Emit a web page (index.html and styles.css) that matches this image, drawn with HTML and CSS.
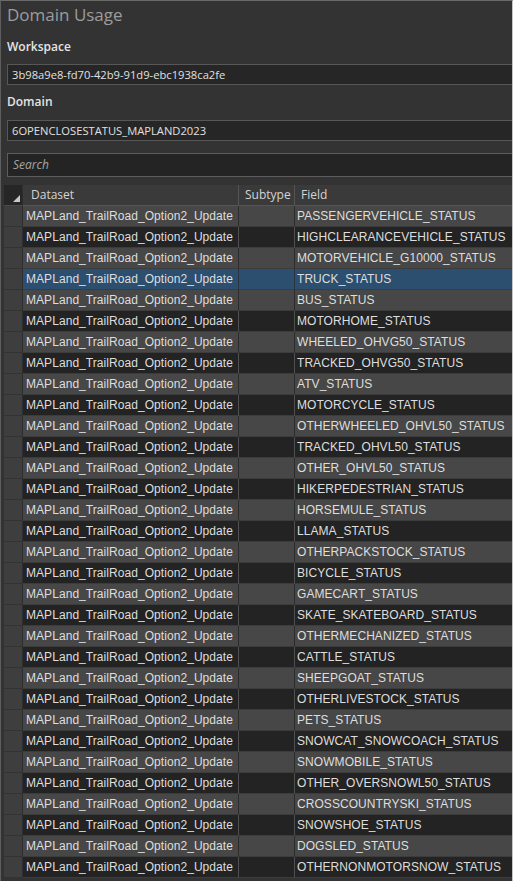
FILE: index.html
```html
<!DOCTYPE html>
<html>
<head>
<meta charset="utf-8">
<link rel="stylesheet" href="styles.css">
</head>
<body>
<div class="panel">
  <div class="title">Domain Usage</div>
  <div class="label">Workspace</div>
  <div class="textbox">3b98a9e8-fd70-42b9-91d9-ebc1938ca2fe</div>
  <div class="label label2">Domain</div>
  <div class="textbox">6OPENCLOSESTATUS_MAPLAND2023</div>
  <div class="search">Search</div>
  <div class="grid">
    <div class="row head">
      <div class="rh corner"><span class="tri"></span></div>
      <div class="c ds">Dataset</div>
      <div class="c st">Subtype</div>
      <div class="c fd">Field</div>
    </div>
    <div class="rows" id="rows"></div>
  </div>
</div>
<script src="app.js"></script>
</body>
</html>
```

FILE: app.js
```js
var fields = ["PASSENGERVEHICLE_STATUS","HIGHCLEARANCEVEHICLE_STATUS","MOTORVEHICLE_G10000_STATUS","TRUCK_STATUS","BUS_STATUS","MOTORHOME_STATUS","WHEELED_OHVG50_STATUS","TRACKED_OHVG50_STATUS","ATV_STATUS","MOTORCYCLE_STATUS","OTHERWHEELED_OHVL50_STATUS","TRACKED_OHVL50_STATUS","OTHER_OHVL50_STATUS","HIKERPEDESTRIAN_STATUS","HORSEMULE_STATUS","LLAMA_STATUS","OTHERPACKSTOCK_STATUS","BICYCLE_STATUS","GAMECART_STATUS","SKATE_SKATEBOARD_STATUS","OTHERMECHANIZED_STATUS","CATTLE_STATUS","SHEEPGOAT_STATUS","OTHERLIVESTOCK_STATUS","PETS_STATUS","SNOWCAT_SNOWCOACH_STATUS","SNOWMOBILE_STATUS","OTHER_OVERSNOWL50_STATUS","CROSSCOUNTRYSKI_STATUS","SNOWSHOE_STATUS","DOGSLED_STATUS","OTHERNONMOTORSNOW_STATUS"];
var host = document.getElementById("rows");
fields.forEach(function (f, i) {
  var r = document.createElement("div");
  r.className = "row data " + (i === 3 ? "sel" : (i % 2 === 0 ? "odd" : "even"));
  r.innerHTML = '<div class="rh"></div><div class="c ds">MAPLand_TrailRoad_Option2_Update</div><div class="c st"></div><div class="c fd">' + f + '</div>';
  host.appendChild(r);
});
```

FILE: styles.css
```css
html, body {
  margin: 0;
  padding: 0;
  background: #333333;
}
.panel {
  box-sizing: border-box;
  width: 513px;
  height: 881px;
  overflow: hidden;
  background: #333333;
  border-top: 1px solid #6a6a6a;
  border-left: 1px solid #5e5e5e;
  border-right: 1px solid #c4c4c4;
  padding-left: 3px;
  font-family: "Open Sans", "Noto Sans", sans-serif;
}
.title {
  margin-left: 3px;
  height: 30px;
  line-height: 28px;
  font-size: 17px;
  color: #9c9c9c;
  white-space: nowrap;
}
.label {
  margin-left: 3px;
  padding-top: 6px;
  padding-bottom: 7px;
  line-height: 20px;
  font-size: 12px;
  font-weight: 600;
  color: #e4e4e4;
}
.label2 {
  padding-top: 7px;
  padding-bottom: 8px;
}
.textbox {
  box-sizing: border-box;
  margin-left: 3px;
  width: 540px;
  height: 21px;
  line-height: 19px;
  background: #262626;
  border: 1px solid #575757;
  padding-left: 4px;
  font-size: 11.2px;
  color: #e0e0e0;
  white-space: nowrap;
}
.search {
  box-sizing: border-box;
  margin-left: 3px;
  margin-top: 12px;
  width: 540px;
  height: 24px;
  line-height: 22px;
  background: #242424;
  border: 1px solid #5c5c5c;
  padding-left: 5px;
  font-size: 12px;
  font-style: italic;
  color: #a4a4a4;
}
.grid {
  margin-top: 8px;
  width: 560px;
}
.row {
  display: flex;
  height: 21px;
}
.rh {
  box-sizing: border-box;
  flex: 0 0 19px;
  background: #3e3e3e;
  border-bottom: 1px solid #333333;
  border-right: 1px solid #2e2e2e;
}
.corner {
  position: relative;
  background: #262626;
  border-bottom: 1px solid #4a4a4a;
}
.tri {
  position: absolute;
  right: 2px;
  bottom: 3px;
  width: 0;
  height: 0;
  border-left: 7px solid transparent;
  border-bottom: 7px solid #c8c8c8;
}
.c {
  box-sizing: border-box;
  height: 21px;
  white-space: nowrap;
  overflow: hidden;
  border-right: 1px solid #555555;
  border-bottom: 1px solid #3a3a3a;
}
.ds { flex: 0 0 216px; }
.st { flex: 0 0 56px; }
.fd { flex: 0 0 270px; }
.head .c {
  background: #3a3a3a;
  border-bottom: 1px solid #555555;
  border-right: 1px solid #555555;
  font-family: "Open Sans", "Noto Sans", sans-serif;
  font-size: 12px;
  line-height: 20px;
  color: #d4d4d4;
  padding-left: 6px;
}
.head .ds { padding-left: 8px; }
.data .c {
  font-family: "Liberation Sans", Arial, sans-serif;
  font-size: 12px;
  letter-spacing: 0.06px;
  line-height: 21px;
  color: #dedede;
  padding-left: 3px;
}
.data .fd { padding-left: 2px; }
.odd .c { background: #474747; border-bottom-color: #3c3c3c; border-right-color: #2c2c2c; }
.even .c { background: #232323; border-bottom-color: #3c3c3c; border-right-color: #505050; }
.sel .c { background: #2c4f70; border-bottom-color: #3c3c3c; border-right-color: #2a3440; }
```
